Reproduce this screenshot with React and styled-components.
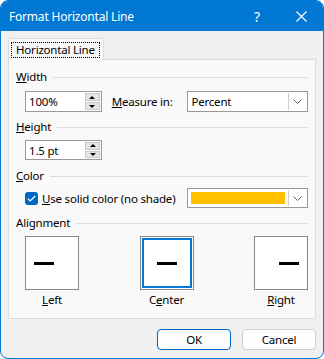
import React from "react";
import styled, { createGlobalStyle } from "styled-components";

const GlobalStyle = createGlobalStyle`
  html, body {
    margin: 0;
    padding: 0;
    background: #fff;
  }
  * {
    box-sizing: border-box;
  }
`;

const Window = styled.div`
  width: 324px;
  height: 359px;
  border: 1px solid #0078d4;
  border-radius: 8px;
  overflow: hidden;
  background: #f0f0f0;
  font-family: "Noto Sans", "Segoe UI", sans-serif;
  font-size: 11.5px;
  letter-spacing: -0.2px;
  color: #000;
  display: flex;
  flex-direction: column;
  white-space: nowrap;
`;

const TitleBar = styled.div`
  height: 30px;
  background: #0078d4;
  color: #fff;
  display: flex;
  align-items: center;
  padding-left: 8px;
  font-size: 12px;
`;

const Title = styled.div`
  flex: 1;
`;

const TitleButton = styled.div`
  width: 44px;
  height: 30px;
  display: flex;
  align-items: center;
  justify-content: center;
  font-size: 14px;
`;

const Body = styled.div`
  flex: 1;
  display: flex;
  flex-direction: column;
  padding: 7px 7px 0 7px;
`;

const TabStrip = styled.div`
  display: flex;
`;

const Tab = styled.div`
  position: relative;
  z-index: 1;
  width: 96px;
  height: 22px;
  margin-bottom: -1px;
  padding: 3px 0 0 2px;
  background: #f9f9f9;
  border: 1px solid #dcdcdc;
  border-bottom: none;
`;

const TabLabel = styled.span`
  display: inline-block;
  border: 1px dotted #000;
  padding: 0 4px;
  line-height: 14px;
`;

const Panel = styled.div`
  border: 1px solid #dcdcdc;
  background: #f9f9f9;
  padding: 9px 7px 10px 7px;
  display: flex;
  flex-direction: column;
`;

const Heading = styled.div`
  display: flex;
  align-items: center;
  gap: 6px;
  line-height: 16px;
  margin-top: ${(p) => p.$gap || 0}px;

  &::after {
    content: "";
    flex: 1;
    height: 1px;
    background: #dcdcdc;
  }
`;

const Row = styled.div`
  display: flex;
  align-items: center;
  margin-left: 9px;
  margin-top: ${(p) => p.$gap || 0}px;
  height: ${(p) => p.$h || 20}px;
`;

const SpinBox = styled.div`
  width: 77px;
  height: 100%;
  display: flex;
  border: 1px solid #999;
  background: #fff;
`;

const SpinText = styled.div`
  flex: 1;
  display: flex;
  align-items: center;
  padding-left: 3px;
`;

const SpinButtons = styled.div`
  width: 16px;
  display: flex;
  flex-direction: column;
  gap: 1px;
  padding: 1px 1px 1px 0;
`;

const SpinButton = styled.div`
  flex: 1;
  background: #e5e5e5;
  border: 1px solid #c8c8c8;
  display: flex;
  align-items: center;
  justify-content: center;

  &::before {
    content: "";
    border-left: 3px solid transparent;
    border-right: 3px solid transparent;
    ${(p) =>
      p.$down
        ? "border-top: 3px solid #000;"
        : "border-bottom: 3px solid #000;"}
  }
`;

const FieldLabel = styled.div`
  width: ${(p) => p.$w}px;
  margin-left: ${(p) => p.$ml || 0}px;
  display: flex;
  align-items: center;
  gap: 4px;
`;

const Select = styled.div`
  width: 121px;
  height: 100%;
  display: flex;
  border: 1px solid #999;
  background: #fff;
`;

const SelectValue = styled.div`
  flex: 1;
  display: flex;
  align-items: center;
  padding: 0 3px;
`;

const Swatch = styled.div`
  flex: 1;
  height: 12px;
  background: ${(p) => p.$color};
`;

const SelectArrow = styled.div`
  width: 18px;
  margin: 1px 1px 1px 0;
  border-left: 1px solid #d0d0d0;
  display: flex;
  align-items: center;
  justify-content: center;
`;

const Checkbox = styled.div`
  width: 13px;
  height: 13px;
  border-radius: 3px;
  background: #0067c0;
  display: flex;
  align-items: center;
  justify-content: center;
`;

const AlignRow = styled.div`
  display: flex;
  justify-content: space-between;
  margin: 5px 0 0 9px;
  width: 283px;
`;

const AlignOption = styled.div`
  display: flex;
  flex-direction: column;
  align-items: center;
  gap: 2px;
  line-height: 16px;
`;

const AlignBox = styled.div`
  width: 54px;
  height: 54px;
  background: #fff;
  border: 1px solid #888;
  display: flex;
  align-items: center;
  justify-content: ${(p) => p.$justify};
  padding: 0 8px;
  box-shadow: ${(p) =>
    p.$selected ? "inset 0 0 0 1px #fff, inset 0 0 0 3px #0078d4" : "none"};
`;

const Dash = styled.div`
  width: 20px;
  height: 3px;
  background: #000;
`;

const ButtonRow = styled.div`
  display: flex;
  justify-content: flex-end;
  gap: 11px;
  margin-top: 10px;
`;

const Button = styled.div`
  width: 74px;
  height: 21px;
  border-radius: 4px;
  background: #fdfdfd;
  border: 1px solid ${(p) => (p.$primary ? "#0067c0" : "#d0d0d0")};
  display: flex;
  align-items: center;
  justify-content: center;
`;

const Chevron = () => (
  <svg width="9" height="5" viewBox="0 0 9 5">
    <polyline points="0.5,0.5 4.5,4.5 8.5,0.5" fill="none" stroke="#606060" strokeWidth="1" />
  </svg>
);

const CloseIcon = () => (
  <svg width="11" height="11" viewBox="0 0 11 11">
    <path d="M0.5 0.5 L10.5 10.5 M10.5 0.5 L0.5 10.5" stroke="#fff" strokeWidth="1.1" />
  </svg>
);

const Check = () => (
  <svg width="9" height="7" viewBox="0 0 9 7">
    <polyline points="0.8,3.6 3.2,6 8.2,1" fill="none" stroke="#fff" strokeWidth="1.2" />
  </svg>
);

const Spinner = ({ value }) => (
  <SpinBox>
    <SpinText>{value}</SpinText>
    <SpinButtons>
      <SpinButton />
      <SpinButton $down />
    </SpinButtons>
  </SpinBox>
);

const alignments = [
  { key: "left", pre: "", u: "L", post: "eft", justify: "flex-start" },
  { key: "center", pre: "C", u: "e", post: "nter", justify: "center", selected: true },
  { key: "right", pre: "", u: "R", post: "ight", justify: "flex-end" },
];

export default function App() {
  return (
    <>
      <GlobalStyle />
      <Window>
        <TitleBar>
          <Title>Format Horizontal Line</Title>
          <TitleButton>?</TitleButton>
          <TitleButton>
            <CloseIcon />
          </TitleButton>
        </TitleBar>
        <Body>
          <TabStrip>
            <Tab>
              <TabLabel>Horizontal Line</TabLabel>
            </Tab>
          </TabStrip>
          <Panel>
            <Heading>
              <span><u>W</u>idth</span>
            </Heading>
            <Row $gap={6} $h={21}>
              <Spinner value="100%" />
              <FieldLabel $w={76} $ml={10}>
                <span><u>M</u>easure in:</span>
              </FieldLabel>
              <Select>
                <SelectValue>Percent</SelectValue>
                <SelectArrow>
                  <Chevron />
                </SelectArrow>
              </Select>
            </Row>

            <Heading $gap={7}>
              <span><u>H</u>eight</span>
            </Heading>
            <Row $gap={5} $h={20}>
              <Spinner value="1.5 pt" />
            </Row>

            <Heading $gap={8}>
              <span><u>C</u>olor</span>
            </Heading>
            <Row $gap={4} $h={20}>
              <FieldLabel $w={162}>
                <Checkbox>
                  <Check />
                </Checkbox>
                <span><u>U</u>se solid color (no shade)</span>
              </FieldLabel>
              <Select>
                <SelectValue>
                  <Swatch $color="#ffc000" />
                </SelectValue>
                <SelectArrow>
                  <Chevron />
                </SelectArrow>
              </Select>
            </Row>

            <Heading $gap={7}>
              <span>Alignment</span>
            </Heading>
            <AlignRow>
              {alignments.map((a) => (
                <AlignOption key={a.key}>
                  <AlignBox $justify={a.justify} $selected={a.selected}>
                    <Dash />
                  </AlignBox>
                  <span>
                    {a.pre}
                    <u>{a.u}</u>
                    {a.post}
                  </span>
                </AlignOption>
              ))}
            </AlignRow>
          </Panel>
          <ButtonRow>
            <Button $primary>OK</Button>
            <Button>Cancel</Button>
          </ButtonRow>
        </Body>
      </Window>
    </>
  );
}
